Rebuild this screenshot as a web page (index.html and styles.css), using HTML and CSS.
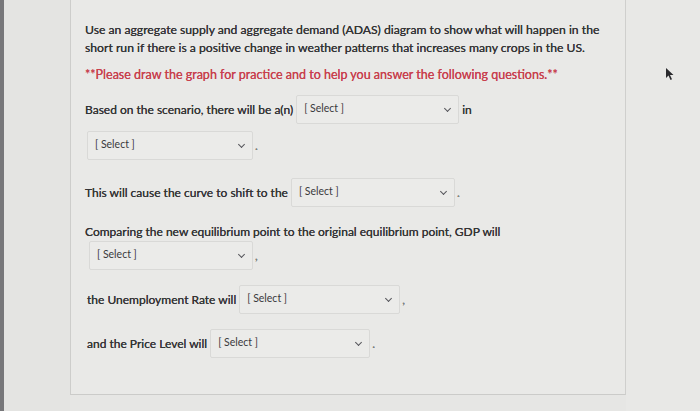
FILE: index.html
```html
<!DOCTYPE html>
<html>
<head>
<meta charset="utf-8">
<link rel="stylesheet" href="styles.css">
</head>
<body>
<div class="screen">
  <div class="edge"></div>
  <div class="gutter"></div>
  <div class="panel">
    <p class="q">Use an aggregate supply and aggregate demand (ADAS) diagram to show what will happen in the short run if there is a positive change in weather patterns that increases many crops in the US.</p>
    <p class="note">**Please draw the graph for practice and to help you answer the following questions.**</p>

    <div class="row r1">
      <span>Based on the scenario, there will be a(n)</span>
      <span class="sel w163"><span class="lbl">[ Select ]</span><span class="chev"></span></span>
      <span>in</span>
    </div>
    <div class="row r2 indent">
      <span class="sel w166"><span class="lbl">[ Select ]</span><span class="chev"></span></span>
      <span class="punct">.</span>
    </div>
    <div class="row r3">
      <span>This will cause the curve to shift to the</span>
      <span class="sel w164"><span class="lbl">[ Select ]</span><span class="chev"></span></span>
      <span class="punct">.</span>
    </div>
    <p class="line r4">Comparing the new equilibrium point to the original equilibrium point, GDP will</p>
    <div class="row indent2">
      <span class="sel w164"><span class="lbl">[ Select ]</span><span class="chev"></span></span>
      <span class="punct">,</span>
    </div>
    <div class="row r5 indent">
      <span>the Unemployment Rate will</span>
      <span class="sel w161"><span class="lbl">[ Select ]</span><span class="chev"></span></span>
      <span class="punct">,</span>
    </div>
    <div class="row r6 indent">
      <span>and the Price Level will</span>
      <span class="sel w160"><span class="lbl">[ Select ]</span><span class="chev"></span></span>
      <span class="punct">.</span>
    </div>
  </div>
  <div class="side"></div>
  <svg class="cursor" width="10" height="14" viewBox="0 0 10 14"><path d="M1 1 L1 11 L3.5 8.5 L5.5 13 L7 12.3 L5 8 L8.5 8 Z" fill="#2a2a2e"/></svg>
</div>
</body>
</html>
```
FILE: styles.css
```css
html, body {
  margin: 0;
  padding: 0;
  background: #e6e6e4;
}
.screen {
  position: relative;
  width: 700px;
  height: 411px;
  display: flex;
  align-items: flex-start;
  overflow: hidden;
  font-family: Lato, "Open Sans", sans-serif;
  color: #343436;
}
.edge {
  width: 4px;
  height: 411px;
  background: #77777a;
}
.gutter {
  width: 66px;
  height: 411px;
  background: #e4e4e2;
}
.panel {
  width: 540px;
  padding: 21px 0 36px 14px;
  background: #e9e9e7;
  border-left: 1px solid #cdcdcb;
  border-right: 1px solid #cfcfcd;
  border-bottom: 1px solid #cbcbc9;
}
.side {
  flex: 1;
  height: 411px;
  background: #e8e8e6;
}
p { margin: 0; }
.q {
  font-size: 12.2px;
  line-height: 18px;
  width: 522px;
  text-shadow: 0 0 0.4px #343436;
}
.note {
  margin-top: 9px;
  font-size: 12.5px;
  line-height: 18px;
  color: #c8404e;
  text-shadow: 0 0 0.4px #c8404e;
}
.row {
  display: flex;
  align-items: center;
  gap: 3px;
  font-size: 12px;
  text-shadow: 0 0 0.3px #343436;
}
.line {
  font-size: 12px;
  line-height: 18px;
  text-shadow: 0 0 0.3px #343436;
}
.indent { padding-left: 2px; }
.indent2 { padding-left: 4px; }
.r1 { margin-top: 11px; }
.r2 { margin-top: 7px; }
.r3 { margin-top: 18px; }
.r4 { margin-top: 16px; }
.r5 { margin-top: 15px; }
.r6 { margin-top: 15px; }
.sel {
  box-sizing: border-box;
  height: 29px;
  display: flex;
  align-items: center;
  justify-content: space-between;
  padding: 0 8px 0 7px;
  background: #ebebe9;
  border: 1px solid #d9d9d7;
  border-radius: 2px;
  text-shadow: none;
}
.w160 { width: 160px; }
.w161 { width: 161px; }
.w163 { width: 163px; }
.w164 { width: 164px; }
.w166 { width: 166px; }
.lbl {
  font-size: 10.5px;
  color: #3a3a3c;
  margin-top: -4px;
}
.chev {
  width: 4px;
  height: 4px;
  border-right: 1.3px solid #55555a;
  border-bottom: 1.3px solid #55555a;
  transform: rotate(45deg);
  margin-top: -2px;
}
.punct { color: #8a8a8a; margin-left: -1px; }
.cursor {
  position: absolute;
  left: 665px;
  top: 67px;
}
```
